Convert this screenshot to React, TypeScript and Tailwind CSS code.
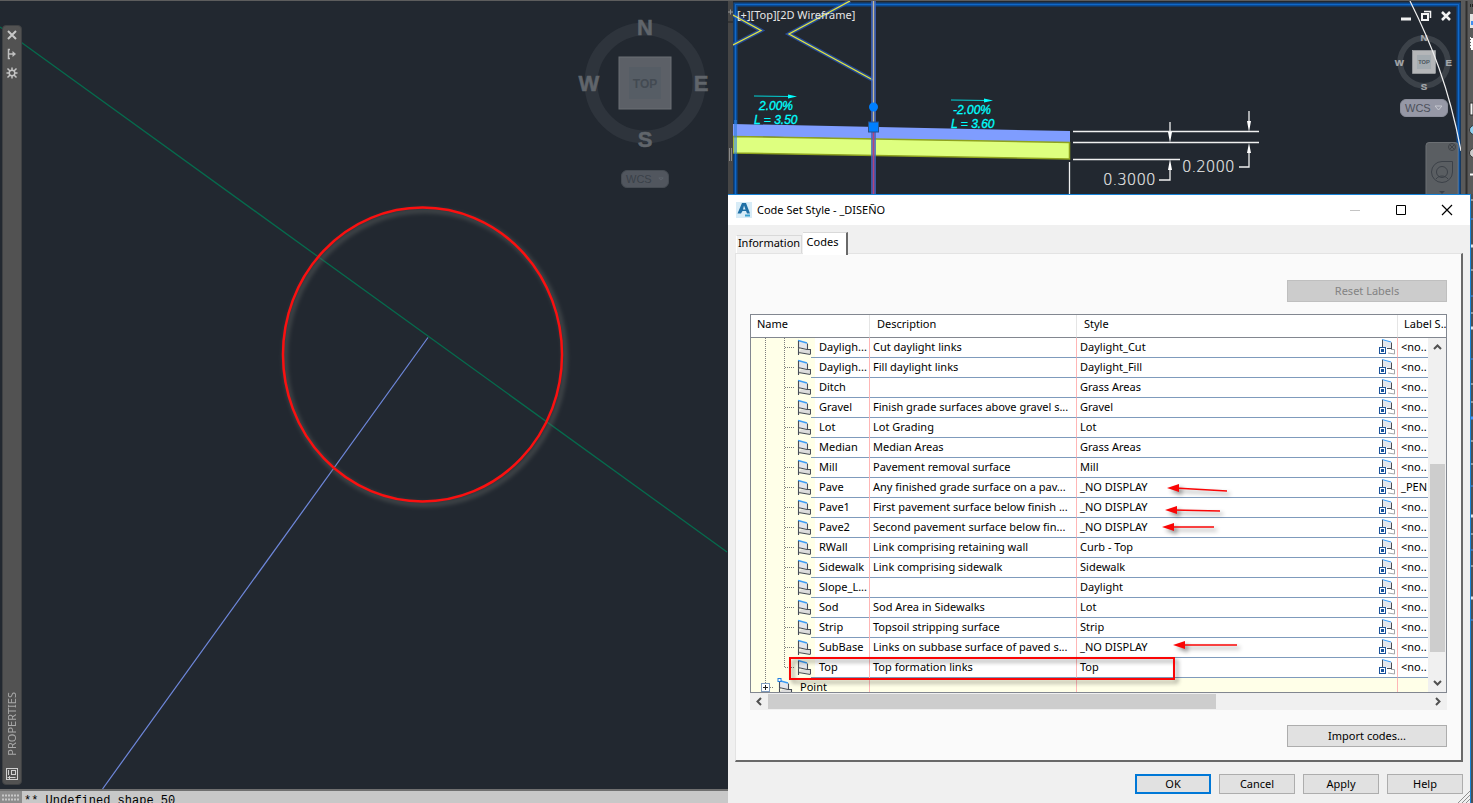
import type { ReactNode } from "react";
import clsx from "clsx";

type CodeRow = {
  name: string;
  description: string;
  style: string;
  label: string;
};

const rows: CodeRow[] = [
  { name: "Dayligh...", description: "Cut daylight links", style: "Daylight_Cut", label: "<no.." },
  { name: "Dayligh...", description: "Fill daylight links", style: "Daylight_Fill", label: "<no.." },
  { name: "Ditch", description: "", style: "Grass Areas", label: "<no.." },
  { name: "Gravel", description: "Finish grade surfaces above gravel s...", style: "Gravel", label: "<no.." },
  { name: "Lot", description: "Lot Grading", style: "Lot", label: "<no.." },
  { name: "Median", description: "Median Areas", style: "Grass Areas", label: "<no.." },
  { name: "Mill", description: "Pavement removal surface", style: "Mill", label: "<no.." },
  { name: "Pave", description: "Any finished grade surface on a pav...", style: "_NO DISPLAY", label: "_PEN" },
  { name: "Pave1", description: "First pavement surface below finish ...", style: "_NO DISPLAY", label: "<no.." },
  { name: "Pave2", description: "Second pavement surface below fin...", style: "_NO DISPLAY", label: "<no.." },
  { name: "RWall", description: "Link comprising retaining wall", style: "Curb - Top", label: "<no.." },
  { name: "Sidewalk", description: "Link comprising sidewalk", style: "Sidewalk", label: "<no.." },
  { name: "Slope_L...", description: "", style: "Daylight", label: "<no.." },
  { name: "Sod", description: "Sod Area in Sidewalks", style: "Lot", label: "<no.." },
  { name: "Strip", description: "Topsoil stripping surface", style: "Strip", label: "<no.." },
  { name: "SubBase", description: "Links on subbase surface of paved s...", style: "_NO DISPLAY", label: "<no.." },
  { name: "Top", description: "Top formation links", style: "Top", label: "<no.." },
];

function ViewCube({ className, size, ring, face, letter }: { className: string; size: "lg" | "sm"; ring: string; face: string; letter: string }) {
  const small = size === "sm";
  return (
    <svg viewBox="0 0 136 136" className={className} fontFamily="Liberation Sans" fontWeight="bold" textAnchor="middle">
      <circle cx="68" cy="68" r="54" fill="none" stroke={ring} strokeWidth="13" />
      <rect x="42" y="42" width="52" height="52" fill={face} stroke={small ? "#c4c6c8" : "#6a6f75"} />
      <rect x="52" y="52" width="32" height="32" fill={small ? "#a3abb0" : "#565d65"} />
      <text x="68" y="73" fontSize={small ? 13 : 12} fill={small ? "#4a545c" : "#434a52"}>TOP</text>
      <g fontSize="22" fill={letter} stroke={letter} strokeWidth="0.500">
        <text x="68" y="20">N</text>
        <text x="68" y="132">S</text>
        <text x="12" y="76">W</text>
        <text x="124" y="76">E</text>
      </g>
    </svg>
  );
}

function PropertiesPalette() {
  return (
    <aside className="relative mt-6 mb-1 ml-[2px] flex w-5 flex-col items-center justify-between rounded-sm border border-[#3f4143] bg-[#525252] pt-[3px] pb-[3px]">
      <div className="flex flex-col items-center gap-[7px]">
        <button aria-label="Close" className="h-3 w-3">
          <svg viewBox="0 0 12 12" className="h-3 w-3">
            <path d="M2 2l8 8M10 2l-8 8" stroke="#c8c8c8" strokeWidth="2" />
          </svg>
        </button>
        <button aria-label="Auto-hide" className="h-3 w-3">
          <svg viewBox="0 0 12 12" className="h-3 w-3" fill="none" stroke="#c0c0c0" strokeWidth="1.500">
            <path d="M4 1.500H2.500V10.500H4M3 6h6" />
            <path d="M6.500 3l3.500 3l-3.500 3z" fill="#c0c0c0" stroke="none" />
          </svg>
        </button>
        <button aria-label="Properties" className="h-3 w-3">
          <svg viewBox="0 0 12 12" className="h-3 w-3">
            <circle cx="6" cy="6" r="2.800" fill="none" stroke="#c4c4c4" strokeWidth="1.500" />
            <path d="M6 .5V3M6 9v2.500M.5 6H3M9 6h2.500M1.500 1.500l2.500 2.500M8 8l2.500 2.500M10.500 1.500L8 4M4 8l-2.500 2.500" stroke="#c4c4c4" strokeWidth="1.500" />
          </svg>
        </button>
      </div>
      <div className="flex flex-col items-center gap-[11px]">
        <span className="rotate-180 text-[11px] leading-4 text-[#a9a9a9] [writing-mode:vertical-rl]">PROPERTIES</span>
        <svg viewBox="0 0 14 14" className="h-[14px] w-[14px]" fill="none" stroke="#d0d0d0">
          <rect x="1.500" y="1.500" width="11" height="11" />
          <rect x="6.500" y="3.500" width="4" height="4" />
          <path d="M3.500 3v5M2.500 10.500h8M4.500 9v3" />
        </svg>
      </div>
    </aside>
  );
}

function LeftDrawing() {
  return (
    <section className="relative flex min-h-0 flex-1 overflow-hidden bg-[#222830]">
      <svg viewBox="0 1 728 788" preserveAspectRatio="xMinYMin slice" className="absolute inset-0 h-full w-full" fill="none">
        <path d="M0 27L727 552" stroke="#066b4d" strokeWidth="1.300" />
        <path d="M428 337.500L102.500 789" stroke="#6f88dc" strokeWidth="1.200" />
        <ellipse cx="425" cy="357.500" rx="140" ry="147" stroke="#5b5f5e" strokeWidth="5" opacity=".55" className="blur-[2px]" />
        <ellipse cx="422.500" cy="354.500" rx="139.500" ry="147" stroke="#fa1010" strokeWidth="2.500" />
      </svg>
      <PropertiesPalette />
      <div className="absolute top-[14px] right-[15px] flex w-[136px] flex-col items-center">
        <ViewCube className="h-[136px] w-[136px]" size="lg" ring="#2e343c" face="#5c6067" letter="#60656b" />
        <button className="mt-[19px] flex h-[18px] w-12 items-center justify-between rounded-md border border-[#454b52] bg-[#51565e] px-1 font-['Liberation_Sans',sans-serif] text-[11px] text-[#3a4149]">
          WCS
          <svg viewBox="0 0 8 5" className="h-1 w-[6px]" fill="none" stroke="#626870">
            <path d="M1 1h6L4 4z" />
          </svg>
        </button>
      </div>
    </section>
  );
}

function CommandLine() {
  return (
    <div className="flex h-[14px] shrink-0 overflow-hidden border-t-2 border-[#707070] bg-[#c8c8c8]">
      <svg viewBox="0 0 22 12" className="h-3 w-[22px] bg-[#8c8c8c]">
        <path d="M2 4.500h17M2 8.500h17" stroke="#c8c8c8" strokeWidth="2" strokeDasharray="2 1" />
      </svg>
      <span className="pt-[2px] pl-[2px] font-['Liberation_Mono',monospace] text-[12px] leading-4 whitespace-pre text-black">** Undefined shape 50</span>
    </div>
  );
}

function SectionDrawing() {
  return (
    <svg viewBox="733 1 728 193" preserveAspectRatio="xMinYMin slice" className="absolute inset-0 h-full w-full" fill="none">
      <rect x="735.500" y="4.500" width="723" height="220" stroke="#0b4a92" strokeWidth="4" />
      <rect x="735.500" y="4.500" width="723" height="220" stroke="#1068c8" />
      {/* pavement and base layers */}
      <path d="M733 124L1070 131V143L733 136z" fill="#7f9dff" />
      <path d="M733 136.500L1069.500 142.500V159L733 153z" fill="#deff7f" stroke="#8ea21e" strokeWidth="1.500" />
      <path d="M735.500 120v34" stroke="#2f7bd8" strokeWidth="3" opacity=".6" />
      {/* highlighted lines */}
      <g stroke="#2857b8" strokeWidth="4" opacity=".75">
        <path d="M733 15L761 30.500L733 45M850 1L789 34L873 80" />
      </g>
      <path d="M733 15L761 30.500L733 45M850 1L789 34L873 80" stroke="#e3e63c" strokeWidth="1.300" />
      <path d="M873.500 1V194" stroke="#3e65c4" strokeWidth="5" opacity=".8" />
      <path d="M873.500 1V130" stroke="#c4b99a" strokeWidth="1.300" />
      <path d="M873.500 132V194" stroke="#b7427c" strokeWidth="1.500" />
      <circle cx="873.500" cy="107" r="4.500" fill="#007fff" />
      <rect x="868.500" y="122" width="10" height="10" fill="#007fff" stroke="#28518a" />
      {/* slope labels */}
      <g stroke="#00d5d8" strokeWidth="1">
        <path d="M754 96l36 .5M951 100l36 .5" />
      </g>
      <path d="M788 94.500l9 2-9 2zM984 98.500l9 2-9 2z" fill="#00ffff" />
      <g fill="#00ffff" stroke="#00ffff" strokeWidth="0.300" fontFamily="Liberation Sans" fontSize="12" fontStyle="italic">
        <text x="759" y="110">2.00%</text>
        <text x="754" y="124">L = 3.50</text>
        <text x="953" y="114">-2.00%</text>
        <text x="951" y="128">L = 3.60</text>
      </g>
      {/* dimensions */}
      <g stroke="#f0f0f0" strokeWidth="1.300">
        <path d="M1073 131.500H1259M1073 142.500H1259M1073 159.500H1180M1069.500 162V194" />
        <path d="M1170 122v12M1170 168v12h-11M1249 111v12M1249 150v17h-10" />
      </g>
      <path d="M1168 132h4l-2 11zM1168 170h4l-2-11zM1247 121h4l-2 11zM1247 153h4l-2-10z" fill="#fff" />
      <g fill="#e8e8e8" stroke="#e8e8e8" strokeWidth="0.200" fontFamily="DejaVu Sans" fontWeight="200" fontSize="15">
        <text x="1182" y="172">0.2000</text>
        <text x="1103" y="185">0.3000</text>
      </g>
    </svg>
  );
}

function WindowButton({ label, children }: { label: string; children: ReactNode }) {
  return (
    <button aria-label={label} className="h-3 w-3">
      <svg viewBox="0 0 12 12" className="h-3 w-3" fill="none" stroke="#f2f2f2" strokeWidth="2">
        {children}
      </svg>
    </button>
  );
}

function RightViewport() {
  return (
    <section className="relative flex-1 overflow-hidden bg-[#222830]">
      <SectionDrawing />
      <p className="absolute top-[5px] left-1 text-[11px] leading-[18px] text-[#e6e6e6]">[+][Top][2D Wireframe]</p>
      <div className="absolute top-[9px] right-[9px] flex gap-2">
        <WindowButton label="Minimize">
          <path d="M1 9h10" strokeWidth="3" />
        </WindowButton>
        <WindowButton label="Restore">
          <path d="M2 4h6v6H2z" />
          <path d="M4 1.500h6.500V8" strokeWidth="1.500" />
        </WindowButton>
        <WindowButton label="Close">
          <path d="M2 2l8 8M10 2l-8 8" strokeWidth="2.500" />
        </WindowButton>
      </div>
      <div className="absolute top-[31px] right-[7px] flex w-[60px] flex-col items-center">
        <ViewCube className="h-[60px] w-[60px]" size="sm" ring="#3c4249" face="#b4b6b8" letter="#a6a9ac" />
        <button className="mt-[7px] flex h-[18px] w-12 items-center justify-between rounded-md border border-[#8b8e9b] bg-[#9698a6] px-1 font-['Liberation_Sans',sans-serif] text-[11px] text-[#4c505a]">
          WCS
          <svg viewBox="0 0 9 6" className="h-[6px] w-[9px]" fill="none" stroke="#c6c8d0">
            <path d="M1 1h7L4.500 5z" />
          </svg>
        </button>
      </div>
      <svg viewBox="0 0 52 193" className="pointer-events-none absolute top-0 right-0 h-[193px] w-[52px]" fill="none">
        <path d="M1 0C22 42 40 86 52 150" stroke="#f0f0f0" strokeWidth="1.200" />
        <rect x="17" y="141.500" width="32" height="60" rx="3" fill="#5a5e62" stroke="#6c7074" />
        <circle cx="43" cy="146" r="3.500" stroke="#3e4247" />
        <path d="M41 144l4 4M45 144l-4 4" stroke="#3e4247" />
        <path d="M33 160.500h10.500V171a10.500 10.500 0 1 1-10.500-10.500z" stroke="#3c4148" />
        <circle cx="33" cy="171" r="5.500" stroke="#3c4148" />
        <path d="M27 178c3-4 9-4 12 0" stroke="#3c4148" />
        <path d="M30 190h6l-3 3z" fill="#3c4148" />
      </svg>
    </section>
  );
}

function ToolStrip() {
  return (
    <svg viewBox="0 0 12 193" className="h-full w-3 shrink-0 bg-[#5a5a5a]" fill="none">
      <path d="M5.500 0V193" stroke="#2f2f2f" strokeWidth="2" />
      <path d="M9 4.500h3" stroke="#222" strokeWidth="3" strokeDasharray="1 1" />
      <path d="M9 13h3v14H9z" fill="#e5e5e5" />
      <path d="M10 20h2v4h-2z" fill="#3f8ef0" />
      <path d="M9.500 36v12" stroke="#eee" strokeDasharray="2 1" />
      <path d="M10 37h2v12h-2z" fill="#fff" />
      <path d="M9 102h3v12H9z" fill="#f3f3f3" stroke="#333" />
      <circle cx="13" cy="129" r="4.500" fill="#8fd0ef" stroke="#333" />
      <circle cx="13" cy="152" r="4.500" fill="#ccc" stroke="#333" />
      <path d="M9 173.500h3" stroke="#fff" strokeWidth="2" />
    </svg>
  );
}

function SideStrip() {
  const marks = [6, 25, 52, 76, 102, 119, 134, 165, 190, 208, 224, 247, 270, 292, 322, 340, 356, 372, 404, 426];
  return (
    <svg viewBox="0 0 2 609" preserveAspectRatio="xMinYMin slice" className="h-full w-[2px] shrink-0 bg-[#4f5052]">
      {marks.map((y, i) => (
        <path key={y} d={`M0 ${y}h2`} stroke={i % 3 === 1 ? "#4b96f5" : "#e4e4e4"} strokeWidth={i % 4 === 2 ? 3 : 1} />
      ))}
    </svg>
  );
}

function Flag() {
  return (
    <>
      <path d="M1 2.500L10 4.500V10L1 8z" fill="#e3e6ec" />
      <path d="M4 10.500L13.500 11V15L1.500 13z" fill="#dcdcdc" />
      <path d="M1 1.500L10 4" stroke="#3b9cf5" strokeWidth="1.500" />
      <path d="M1.500 2V16M1 8.500l9 2M10.500 4.500V10.500h3V15M1.500 13.500l12 2" stroke="#474c57" strokeWidth="1.100" />
    </>
  );
}

function TreeCell({ last }: { last: boolean }) {
  return (
    <svg viewBox="0 0 60 20" className="h-5 w-[60px] shrink-0 bg-[#ffffe8]" fill="none">
      <g stroke="#7d7d7d" strokeDasharray="1 1">
        <path d="M14.500 0V20" />
        <path d={last ? "M33.500 0V9.500" : "M33.500 0V20"} />
        <path d="M34 9.500h9" />
      </g>
      <g transform="translate(46 1)">
        <Flag />
      </g>
    </svg>
  );
}

function StyleIcon() {
  return (
    <svg viewBox="0 0 17 17" className="h-[17px] w-[17px] shrink-0" fill="none">
      <path d="M4 2.500L13 4.500V10L4 9z" fill="#e3e6ec" />
      <path d="M4 1.500L13 4" stroke="#3b9cf5" strokeWidth="1.200" />
      <path d="M4.500 2V9M13.500 4.500V11.500M9 10.500h5" stroke="#474c57" />
      <path d="M13 11.500h3.500V16L10 15" stroke="#a5a7ab" />
      <rect x="1.500" y="9.500" width="6" height="6" fill="#fff" stroke="#1a539b" />
      <rect x="3.500" y="11.500" width="2" height="2" fill="#1a539b" stroke="#1a539b" />
    </svg>
  );
}

function Annotations() {
  const arrows = [
    { x: 416, y: 173, dx: 60, dy: 3 },
    { x: 414, y: 195, dx: 55, dy: 1 },
    { x: 411, y: 212, dx: 52, dy: 0 },
    { x: 422, y: 330, dx: 64, dy: 0 },
  ];
  return (
    <svg className="pointer-events-none absolute inset-0 h-full w-full overflow-visible [filter:drop-shadow(3px_3px_2px_rgba(0,0,0,0.45))]" fill="none">
      {arrows.map((a, i) => (
        <g key={i}>
          <path d={`M${a.x + 8} ${a.y}l${a.dx - 8} ${a.dy}`} stroke="#fa0505" strokeWidth="1.500" />
          <path d={`M${a.x} ${a.y}l12 -4v8z`} fill="#fa0505" />
        </g>
      ))}
      <rect x="39" y="343" width="384" height="21" stroke="#fa0505" strokeWidth="2" />
    </svg>
  );
}

function CodesTable() {
  const th = "h-[23px] border-b border-[#828790] bg-white px-0 pb-1 text-left font-normal";
  const td = "border-r border-r-[#ffb6b6] border-b border-b-[#7f9bbc] p-0";
  return (
    <div className="relative min-h-0 flex-1 border border-[#828790]">
      <div className="h-full overflow-hidden bg-white">
        <table className="w-full table-fixed border-separate border-spacing-0 leading-[18px] whitespace-nowrap">
          <colgroup>
            <col className="w-[119px]" />
            <col className="w-[207px]" />
            <col />
            <col className="w-[48px]" />
          </colgroup>
          <thead>
            <tr>
              <th className={clsx(th, "border-r border-r-[#e5e5e5] pl-[6px]")}>Name</th>
              <th className={clsx(th, "border-r border-r-[#e5e5e5] pl-[7px]")}>Description</th>
              <th className={clsx(th, "border-r border-r-[#e5e5e5] pl-[7px]")}>Style</th>
              <th className={clsx(th, "pl-[6px]")}>Label S..</th>
            </tr>
          </thead>
          <tbody>
            {rows.map((row, i) => (
              <tr key={i}>
                <td className="overflow-hidden border-r border-r-[#ffb6b6] p-0">
                  <div className="flex h-5 bg-[#ffffe8]">
                    <TreeCell last={i === rows.length - 1} />
                    <span className="flex-1 border-b border-[#7f9bbc] bg-linear-to-r from-[#ffffe8] from-[4px] to-white to-[4px] pl-[8px]">{row.name}</span>
                  </div>
                </td>
                <td className={clsx(td, "pb-[1px] pl-[3px]")}>{row.description}</td>
                <td className={td}>
                  <div className="flex h-[19px] justify-between pr-[2px] pl-[3px]">
                    {row.style}
                    <StyleIcon />
                  </div>
                </td>
                <td className={clsx(td, "pb-[1px] pl-[3px]")}>{row.label}</td>
              </tr>
            ))}
            <tr className="bg-[#ffffe8]">
              <td className="border-r border-[#ffb6b6] p-0">
                <div className="flex h-5">
                  <svg viewBox="0 0 45 20" className="h-5 w-[45px] shrink-0" fill="none">
                    <path d="M14.500 0V6M19 9.500h4" stroke="#7d7d7d" strokeDasharray="1 1" />
                    <rect x="10.500" y="5.500" width="8" height="8" fill="#fff" stroke="#7f9bbc" />
                    <path d="M12 9.500h5M14.500 7v5" stroke="#222" />
                    <g transform="translate(27 1)">
                      <Flag />
                      <rect x="0" y="-.5" width="3" height="3" fill="#fff" stroke="#1f7fe0" />
                    </g>
                  </svg>
                  <span className="pl-1">Point</span>
                </div>
              </td>
              <td className="border-r border-[#ffb6b6]" />
              <td className="border-r border-[#ffb6b6]" />
              <td />
            </tr>
          </tbody>
        </table>
      </div>
      {/* vertical scroll bar */}
      <div className="absolute top-[23px] right-0 bottom-0 flex w-[18px] flex-col items-center bg-[#f0f0f0]">
        <svg viewBox="0 0 9 6" className="my-[6px] h-[6px] w-[9px] shrink-0" fill="none" stroke="#505050" strokeWidth="2">
          <path d="M1 5l3.500-3.500L8 5" />
        </svg>
        <div className="flex-[108]" />
        <div className="w-[15px] flex-[188] bg-[#cdcdcd]" />
        <div className="flex-[22]" />
        <svg viewBox="0 0 9 6" className="my-[6px] h-[6px] w-[9px] shrink-0" fill="none" stroke="#505050" strokeWidth="2">
          <path d="M1 1l3.500 3.500L8 1" />
        </svg>
      </div>
      <Annotations />
    </div>
  );
}

function DialogButton({ children, primary }: { children: ReactNode; primary?: boolean }) {
  return (
    <button className={clsx("h-5 w-[76px] bg-[#e1e1e1] leading-4", primary ? "border-2 border-[#0078d7]" : "border border-[#adadad]")}>
      {children}
    </button>
  );
}

function StyleDialog() {
  return (
    <section className="relative flex min-w-0 flex-1 flex-col border-t border-r border-[#1883d7] bg-[#f0f0f0] text-black">
      <header className="flex h-[30px] shrink-0 items-center bg-white pr-[17px] pl-2">
        <svg viewBox="0 0 16 16" className="h-4 w-4 bg-[#d8ecf7]">
          <path d="M1.500 11.500L6 1h4l4 10.500h-3l-1-2.500H6.500L5 11.500z" fill="#1f6fa5" />
          <path d="M7 7.500h2.500L8 3.500z" fill="#d8ecf7" />
          <path d="M9 13.500h5" stroke="#3aa0cf" strokeWidth="2" />
        </svg>
        <h1 className="ml-[5px] flex-1 leading-4">Code Set Style - _DISEÑO</h1>
        <div className="flex items-center gap-[34px]">
          <button aria-label="Minimize" disabled>
            <svg viewBox="0 0 12 12" className="h-3 w-3" stroke="#c4c4c4"><path d="M1 6.500h10" /></svg>
          </button>
          <button aria-label="Maximize">
            <svg viewBox="0 0 12 12" className="h-3 w-3" fill="none" stroke="#000"><path d="M1.500 1.500h9v9h-9z" /></svg>
          </button>
          <button aria-label="Close">
            <svg viewBox="0 0 12 12" className="h-3 w-3" stroke="#000" strokeWidth="1.200"><path d="M1 1l10 10M11 1L1 11" /></svg>
          </button>
        </div>
      </header>
      <div className="flex min-h-0 flex-1 flex-col px-[7px] pt-[7px] pb-[9px]">
        <div role="tablist" className="flex items-end pl-[1px]">
          <button role="tab" aria-selected="false" className="h-[18px] w-[66px] border-t border-r border-l border-[#d9d9d9] border-l-white bg-[#f0f0f0] pb-1 leading-3">Information</button>
          <button role="tab" aria-selected="true" className="relative -mb-[2px] ml-[1px] h-[23px] w-[45px] border-t border-r-2 border-[#d9d9d9] border-r-[#696969] bg-white pr-1 pb-1 leading-[18px]">Codes</button>
        </div>
        <div className="flex min-h-0 flex-1 flex-col border-t border-r-2 border-b-2 border-l border-[#e3e3e3] border-r-[#696969] border-b-[#696969] bg-[#fafafa] pt-[26px] pr-[14px] pb-[13px] pl-[14px]">
          <button disabled className="mb-3 h-[22px] w-[160px] shrink-0 self-end border border-[#bfbfbf] bg-[#cccccc] leading-4 text-[#838383]">Reset Labels</button>
          <CodesTable />
          {/* horizontal scroll bar */}
          <div className="mb-[15px] flex h-[17px] shrink-0 items-center bg-[#f0f0f0]">
            <svg viewBox="0 0 6 9" className="mx-[6px] h-[9px] w-[6px]" fill="none" stroke="#505050" strokeWidth="2">
              <path d="M5 1L1.500 4.500L5 8" />
            </svg>
            <div className="h-[15px] flex-[449] bg-[#cdcdcd]" />
            <div className="flex-[213]" />
            <svg viewBox="0 0 6 9" className="mx-[6px] h-[9px] w-[6px]" fill="none" stroke="#505050" strokeWidth="2">
              <path d="M1 1l3.500 3.500L1 8" />
            </svg>
          </div>
          <button className="h-[22px] w-[160px] shrink-0 self-end border border-[#adadad] bg-[#e1e1e1] leading-4">Import codes...</button>
        </div>
        <div className="mt-3 flex justify-end gap-2">
          <DialogButton primary>OK</DialogButton>
          <DialogButton>Cancel</DialogButton>
          <DialogButton>Apply</DialogButton>
          <DialogButton>Help</DialogButton>
        </div>
      </div>
      <svg viewBox="0 0 12 12" className="absolute right-0 bottom-0 h-3 w-3" stroke="#8f8f8f">
        <path d="M0 12L12 0M4 12l8-8M8 12l4-4" />
      </svg>
    </section>
  );
}

export default function App() {
  return (
    <main className="flex h-screen overflow-hidden border-t border-[#5d5d5d] bg-[#3b3b3b] font-['Noto_Sans',sans-serif] text-[11px]">
      <div className="flex min-w-0 flex-1 flex-col">
        <LeftDrawing />
        <CommandLine />
      </div>
      <div className="flex w-[745px] shrink-0 flex-col">
        <div className="flex h-[193px] shrink-0">
          <svg viewBox="0 0 5 193" className="h-full w-[5px] bg-[#464646]">
            <path d="M0 11h5M2.500 8.500v5" stroke="#999" />
            <path d="M0 21h5" stroke="#222" />
            <path d="M1.500 147v13M3.500 147v13" stroke="#8a8a8a" />
          </svg>
          <RightViewport />
          <ToolStrip />
        </div>
        <div className="flex min-h-0 flex-1">
          <StyleDialog />
          <SideStrip />
        </div>
      </div>
    </main>
  );
}
